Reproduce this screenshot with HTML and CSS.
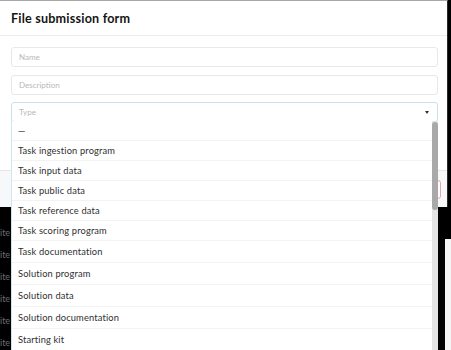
FILE: index.html
```html
<!DOCTYPE html>
<html lang="en">
<head>
    <meta charset="UTF-8">
    <meta name="viewport" content="width=device-width, initial-scale=1.0">
    <title>File submission form</title>
    <link rel="stylesheet" href="styles.css">
</head>
<body>
    <div class="page">
        <div class="modal">
            <div class="modal-header">
                <h2>File submission form</h2>
            </div>
            <div class="modal-body">
                <input type="text" class="field" placeholder="Name">
                <input type="text" class="field" placeholder="Description">
                <div class="field select focused">
                    <span class="placeholder">Type</span>
                    <span class="caret"></span>
                </div>
            </div>
            <div class="modal-footer">
                <button class="btn-cancel">Cancel</button>
            </div>
        </div>

        <div class="behind">
            <div class="behind-rows">
                <div class="behind-row">ite</div>
                <div class="behind-row">ite</div>
                <div class="behind-row">ite</div>
                <div class="behind-row">ite</div>
                <div class="behind-row">ite</div>
                <div class="behind-row">ite</div>
            </div>
            <div class="behind-panel"></div>
        </div>

        <ul class="dropdown">
            <li class="option">&mdash;</li>
            <li class="option">Task ingestion program</li>
            <li class="option">Task input data</li>
            <li class="option">Task public data</li>
            <li class="option">Task reference data</li>
            <li class="option">Task scoring program</li>
            <li class="option tall">Task documentation</li>
            <li class="option tall">Solution program</li>
            <li class="option tall">Solution data</li>
            <li class="option tall">Solution documentation</li>
            <li class="option tall">Starting kit</li>
            <div class="scrollbar"><div class="thumb"></div></div>
        </ul>
    </div>
</body>
</html>
```

FILE: styles.css
```css
body {
    margin: 0;
    padding: 0;
    background-color: #000;
    font-family: Lato, 'Open Sans', sans-serif;
    overflow: hidden;
}
.page {
    position: relative;
    width: 451px;
    height: 350px;
}
.modal {
    width: 448px;
    background-color: #fff;
    border-top: 1px solid #a8a8a8;
    border-right: 1px solid #2a2a2a;
    box-sizing: border-box;
}
.modal-header {
    height: 34px;
    padding: 0 11px;
    border-bottom: 1px solid #ececec;
    display: flex;
    align-items: center;
}
.modal-header h2 {
    margin: 0;
    font-size: 12.6px;
    font-weight: bold;
    color: #151515;
    letter-spacing: 0.2px;
}
.modal-body {
    padding: 11px 9px 48px 11px;
    display: flex;
    flex-direction: column;
    gap: 8px;
}
.field {
    height: 20px;
    width: 100%;
    box-sizing: border-box;
    border: 1px solid #e6e8ea;
    border-radius: 3px;
    padding: 0 7px;
    font-family: Lato, sans-serif;
    font-size: 8px;
    color: #333;
    outline: none;
}
.field::placeholder {
    color: #b8b8b8;
}
.select {
    display: flex;
    align-items: center;
    justify-content: space-between;
    margin-top: -1px;
}
.select.focused {
    border-color: #c5e2ec;
}
.placeholder {
    color: #b8b8b8;
    font-size: 8px;
}
.caret {
    width: 0;
    height: 0;
    margin-right: 1px;
    border-left: 2.5px solid transparent;
    border-right: 2.5px solid transparent;
    border-top: 3px solid #333;
}
.modal-footer {
    height: 36px;
    background-color: #f7f8fa;
    border-top: 1px solid #e6e6e6;
    display: flex;
    justify-content: flex-end;
    align-items: center;
    padding-right: 6px;
}
.btn-cancel {
    height: 19px;
    padding: 0 12px;
    background-color: #fff;
    border: 1px solid #f0a0a8;
    border-radius: 3px;
    color: #d9534f;
    font-size: 9px;
    font-family: Lato, sans-serif;
}
.behind {
    display: flex;
    justify-content: space-between;
}
.behind-rows {
    padding-top: 15px;
}
.behind-row {
    height: 22px;
    line-height: 22px;
    font-size: 9px;
    color: #6d6d6d;
}
.behind-panel {
    width: 6px;
    height: 115px;
    margin-top: 32px;
    background-color: #f4f4f4;
}
.dropdown {
    position: absolute;
    top: 121px;
    left: 11px;
    width: 427px;
    height: 240px;
    margin: 0;
    padding: 0;
    list-style: none;
    background-color: #fff;
    border-left: 1px solid #cfe6ee;
    box-sizing: border-box;
    overflow: hidden;
}
.option {
    height: 20px;
    line-height: 20px;
    padding-left: 6px;
    border-bottom: 1px solid #f3f3f3;
    box-sizing: border-box;
    font-size: 9.3px;
    letter-spacing: 0.15px;
    color: #2f2f2f;
}
.option.tall {
    height: 22px;
    line-height: 22px;
}
.scrollbar {
    position: absolute;
    top: 0;
    right: 0;
    width: 6px;
    height: 100%;
    background-color: #e4e4e4;
}
.thumb {
    margin-top: 1px;
    height: 88px;
    background-color: #a9a9a9;
    border-radius: 3px;
}
```
